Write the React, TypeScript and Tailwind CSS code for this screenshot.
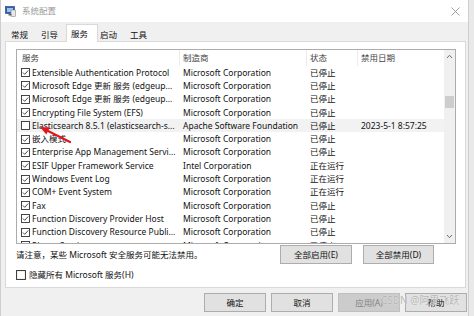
import React from "react";

type Row = { c: boolean; n: string; m: string; s: string; d?: string; hl?: boolean };

const rows: Row[] = [
  { c: true, n: "Extensible Authentication Protocol", m: "Microsoft Corporation", s: "已停止" },
  { c: true, n: "Microsoft Edge 更新 服务 (edgeup...", m: "Microsoft Corporation", s: "已停止" },
  { c: true, n: "Microsoft Edge 更新 服务 (edgeup...", m: "Microsoft Corporation", s: "已停止" },
  { c: true, n: "Encrypting File System (EFS)", m: "Microsoft Corporation", s: "已停止" },
  { c: false, n: "Elasticsearch 8.5.1 (elasticsearch-s...", m: "Apache Software Foundation", s: "已停止", d: "2023-5-1 8:57:25", hl: true },
  { c: true, n: "嵌入模式", m: "Microsoft Corporation", s: "已停止" },
  { c: true, n: "Enterprise App Management Servi...", m: "Microsoft Corporation", s: "已停止" },
  { c: true, n: "ESIF Upper Framework Service", m: "Intel Corporation", s: "正在运行" },
  { c: true, n: "Windows Event Log", m: "Microsoft Corporation", s: "正在运行" },
  { c: true, n: "COM+ Event System", m: "Microsoft Corporation", s: "正在运行" },
  { c: true, n: "Fax", m: "Microsoft Corporation", s: "已停止" },
  { c: true, n: "Function Discovery Provider Host", m: "Microsoft Corporation", s: "已停止" },
  { c: true, n: "Function Discovery Resource Publi...", m: "Microsoft Corporation", s: "已停止" },
  { c: true, n: "Phone Service", m: "Microsoft Corporation", s: "已停止" },
];

function Box({ checked, size = 9 }: { checked: boolean; size?: number }) {
  return (
    <svg width={size} height={size} viewBox="0 0 9 9" className="shrink-0">
      <rect x="0.5" y="0.5" width="8" height="8" fill="white" stroke="#333333" strokeWidth="0.9" />
      {checked && (
        <path d="M1.9 4.5 L3.7 6.3 L7.2 2.5" fill="none" stroke="#333333" strokeWidth="0.9" />
      )}
    </svg>
  );
}

function Btn({ label, w, disabled }: { label: string; w: string; disabled?: boolean }) {
  return (
    <div
      className={
        "h-[19px] flex items-center justify-center border " +
        w +
        (disabled
          ? " bg-[#cccccc] border-[#bfbfbf] text-[#838383]"
          : " bg-[#e1e1e1] border-[#adadad] text-[#111111]")
      }
    >
      {label}
    </div>
  );
}

export default function App() {
  return (
    <div className="relative w-[474px] h-[316px] overflow-hidden bg-[#e9e9e9] font-['Noto_Sans','Noto_Sans_CJK_SC',sans-serif] text-[8.5px] leading-[12px] text-[#111111]">
      <div className="flex flex-col w-[469px] h-[316px] bg-[#f0f0f0] border-l border-r border-[#cdcdcd]">
        {/* Title bar */}
        <div className="h-[22px] shrink-0 bg-white flex items-center pl-[4px] pr-[6px]">
          <svg width="11" height="11" viewBox="0 0 11 11" className="shrink-0">
            <rect x="0.5" y="0.5" width="9" height="7" fill="#2f5faa" stroke="#1f3f7a" strokeWidth="0.6" />
            <rect x="2" y="2" width="6" height="4" fill="#9fc3f0" />
            <rect x="6" y="4" width="4.5" height="6.5" fill="#e8e8e8" stroke="#777" strokeWidth="0.5" />
            <rect x="3.5" y="8" width="3" height="1.5" fill="#666" />
          </svg>
          <span className="ml-[6px] text-[#9a9a9a] text-[8.5px]">系统配置</span>
          <svg width="9" height="9" viewBox="0 0 9 9" className="ml-auto mr-[2px]">
            <path d="M0.5 0.5 L8.5 8.5 M8.5 0.5 L0.5 8.5" stroke="#8a8a8a" strokeWidth="0.8" />
          </svg>
        </div>

        {/* Tabs */}
        <div className="relative z-10 h-[19px] shrink-0 flex items-end pl-[5px]">
          <div className="w-[30px] h-[17px] pl-[5px] pt-[4px] flex items-center">常规</div>
          <div className="w-[30px] h-[17px] pl-[5px] pt-[4px] flex items-center">引导</div>
          <div className="w-[32px] h-[18px] -mb-px -mr-[2px] pl-[4px] pt-[1px] flex items-center bg-white border border-b-0 border-[#d9d9d9]">
            服务
          </div>
          <div className="w-[30px] h-[17px] pl-[4px] pt-[4px] flex items-center">启动</div>
          <div className="w-[30px] h-[17px] pl-[4px] pt-[4px] flex items-center">工具</div>
        </div>

        {/* Tab panel */}
        <div className="ml-[4px] w-[461px] h-[247px] shrink-0 bg-white border border-[#d9d9d9] flex flex-col">
          {/* List box */}
          <div className="ml-[10px] mt-[7px] w-[440px] h-[195px] shrink-0 border border-[#acacac] flex overflow-hidden">
            <div className="w-[427px] flex flex-col overflow-hidden">
              {/* header */}
              <div className="h-[16px] shrink-0 flex items-center text-[#444444]">
                <div className="w-[163px] shrink-0 pl-[5px] h-full flex items-center border-r border-[#ececec]">服务</div>
                <div className="w-[127px] shrink-0 pl-[3px] h-full flex items-center border-r border-[#ececec]">制造商</div>
                <div className="w-[51px] shrink-0 pl-[3px] h-full flex items-center border-r border-[#ececec]">状态</div>
                <div className="flex-1 pl-[3px] h-full flex items-center">禁用日期</div>
              </div>
              {rows.map((r, i) => (
                <div
                  key={i}
                  className={"h-[13.3px] shrink-0 flex items-center whitespace-nowrap " + (r.hl ? "bg-[#f2f2f2]" : "")}
                >
                  <div className="w-[163px] shrink-0 pl-[4px] flex items-center">
                    <Box checked={r.c} />
                    <span className="ml-[2px]">{r.n}</span>
                  </div>
                  <div className="w-[127px] shrink-0 pl-[3px]">{r.m}</div>
                  <div className="w-[51px] shrink-0 pl-[3px]">{r.s}</div>
                  <div className="flex-1 pl-[3px]">{r.d ?? ""}</div>
                </div>
              ))}
            </div>
            {/* scrollbar */}
            <div className="w-[11px] bg-[#f0f0f0] flex flex-col items-center">
              <svg width="7" height="5" viewBox="0 0 7 5" className="mt-[4px]">
                <path d="M1 4 L3.5 1.3 L6 4" fill="none" stroke="#606060" strokeWidth="0.9" />
              </svg>
              <div className="mt-[37px] w-[9px] h-[12px] bg-[#cdcdcd]" />
              <svg width="7" height="5" viewBox="0 0 7 5" className="mt-auto mb-[4px]">
                <path d="M1 1 L3.5 3.7 L6 1" fill="none" stroke="#606060" strokeWidth="0.9" />
              </svg>
            </div>
          </div>

          {/* note + buttons */}
          <div className="h-[20px] shrink-0 flex items-start pl-[10px] pr-[31px]">
            <span className="self-center mt-[1px]">请注意，某些 Microsoft 安全服务可能无法禁用。</span>
            <div className="ml-auto mt-[1px] flex gap-[11px]">
              <Btn label="全部启用(E)" w="w-[72px]" />
              <Btn label="全部禁用(D)" w="w-[71px]" />
            </div>
          </div>

          {/* hide ms */}
          <div className="mt-[6px] h-[10px] flex items-center pl-[10px]">
            <Box checked={false} size={10} />
            <span className="ml-[3px]">隐藏所有 Microsoft 服务(H)</span>
          </div>
        </div>

        {/* bottom buttons */}
        <div className="mt-[5px] ml-[203px] flex gap-[5px]">
          <Btn label="确定" w="w-[62px]" />
          <Btn label="取消" w="w-[62px]" />
          <Btn label="应用(A)" w="w-[62px]" disabled />
          <Btn label="帮助" w="w-[62px]" />
        </div>
      </div>

      {/* red arrow annotation */}
      <svg className="absolute left-0 top-0 pointer-events-none" width="474" height="316" viewBox="0 0 474 316">
        <line x1="70" y1="142" x2="47" y2="130.5" stroke="#e3161c" strokeWidth="2.2" strokeLinecap="round" />
        <polygon points="40,127 49.8,127.6 46.3,134.6" fill="#e3161c" />
      </svg>

      {/* watermark */}
      <div className="absolute left-[381px] top-[294px] text-[10px] leading-[12px] text-[#b4b4b4] whitespace-nowrap [text-shadow:0_0_1px_#ffffff]">
        CSDN @阿里飞跃
      </div>
    </div>
  );
}
